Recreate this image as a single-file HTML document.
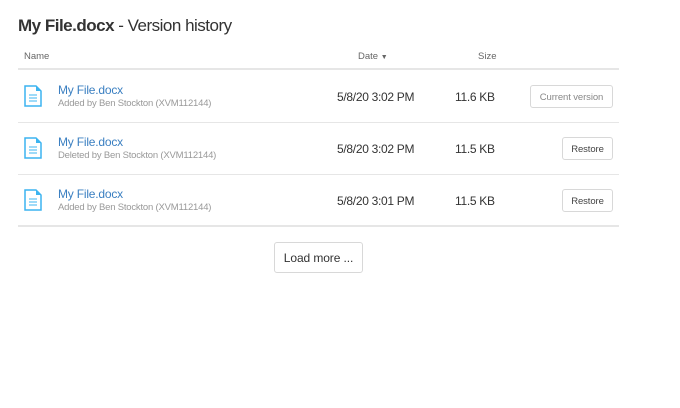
<!DOCTYPE html>
<html><head><meta charset="utf-8"><style>
*{margin:0;padding:0;box-sizing:border-box}
body{width:680px;height:408px;background:#fff;font-family:"Liberation Sans",sans-serif;position:relative;overflow:hidden;color:#333}
.a{position:absolute;white-space:nowrap}
h1{position:absolute;left:18px;top:16px;font-size:17px;font-weight:normal;color:#333;letter-spacing:-0.5px}
h1 b{font-weight:bold}
.hd{font-size:9.5px;color:#666}
.line{position:absolute;left:18px;width:601px;height:2px;background:#e6e6e6}
.name{font-size:12px;color:#3a7fc1;letter-spacing:-0.2px}
.sub{font-size:9.5px;color:#999;letter-spacing:-0.2px}
.val{font-size:12px;color:#333;letter-spacing:-0.3px}
.btn{position:absolute;border:1px solid #d8d8d8;border-radius:3px;font-size:9.5px;color:#444;text-align:center;background:#fff;letter-spacing:-0.1px}
</style></head><body>
<h1><b>My File.docx</b> - Version history</h1>
<div class="a hd" style="left:24px;top:51px">Name</div>
<div class="a hd" style="left:358px;top:51px">Date <span style="font-size:7px">▼</span></div>
<div class="a hd" style="left:478px;top:51px">Size</div>
<div class="line" style="top:68px"></div>

<svg class="a" style="left:24px;top:85px" width="18" height="22" viewBox="0 0 18 22"><path d="M1 1H12L17 6V21H1Z" fill="none" stroke="#3cb4f0" stroke-width="1.5"/><path d="M12 1V6H17Z" fill="#3cb4f0"/><path d="M5 10H13M5 13H13M5 16H13" stroke="#3cb4f0" stroke-width="1.1"/></svg>
<div class="a name" style="left:58px;top:83px">My File.docx</div>
<div class="a sub" style="left:58px;top:98px">Added by Ben Stockton (XVM112144)</div>
<div class="a val" style="left:337px;top:90px">5/8/20 3:02 PM</div>
<div class="a val" style="left:455px;top:90px">11.6 KB</div>
<div class="btn" style="left:530px;top:85px;width:83px;height:23px;line-height:23px;color:#888">Current version</div>
<div class="line" style="top:122px;height:1px"></div>

<svg class="a" style="left:24px;top:137px" width="18" height="22" viewBox="0 0 18 22"><path d="M1 1H12L17 6V21H1Z" fill="none" stroke="#3cb4f0" stroke-width="1.5"/><path d="M12 1V6H17Z" fill="#3cb4f0"/><path d="M5 10H13M5 13H13M5 16H13" stroke="#3cb4f0" stroke-width="1.1"/></svg>
<div class="a name" style="left:58px;top:135px">My File.docx</div>
<div class="a sub" style="left:58px;top:150px">Deleted by Ben Stockton (XVM112144)</div>
<div class="a val" style="left:337px;top:142px">5/8/20 3:02 PM</div>
<div class="a val" style="left:455px;top:142px">11.5 KB</div>
<div class="btn" style="left:562px;top:137px;width:51px;height:23px;line-height:23px">Restore</div>
<div class="line" style="top:174px;height:1px"></div>

<svg class="a" style="left:24px;top:189px" width="18" height="22" viewBox="0 0 18 22"><path d="M1 1H12L17 6V21H1Z" fill="none" stroke="#3cb4f0" stroke-width="1.5"/><path d="M12 1V6H17Z" fill="#3cb4f0"/><path d="M5 10H13M5 13H13M5 16H13" stroke="#3cb4f0" stroke-width="1.1"/></svg>
<div class="a name" style="left:58px;top:187px">My File.docx</div>
<div class="a sub" style="left:58px;top:202px">Added by Ben Stockton (XVM112144)</div>
<div class="a val" style="left:337px;top:194px">5/8/20 3:01 PM</div>
<div class="a val" style="left:455px;top:194px">11.5 KB</div>
<div class="btn" style="left:562px;top:189px;width:51px;height:23px;line-height:23px">Restore</div>
<div class="line" style="top:225px"></div>

<div class="btn" style="left:274px;top:242px;width:89px;height:31px;line-height:31px;font-size:12px;color:#333">Load more ...</div>
</body></html>
